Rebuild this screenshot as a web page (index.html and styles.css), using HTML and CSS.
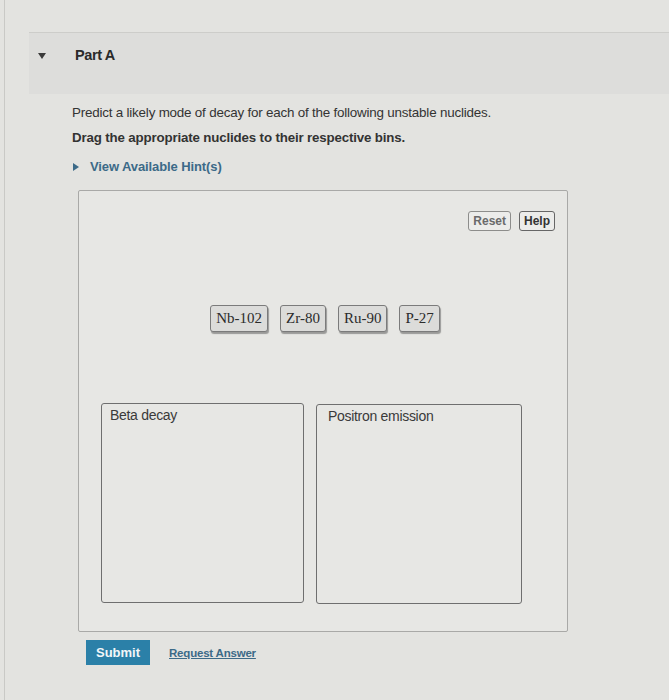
FILE: index.html
```html
<!DOCTYPE html>
<html>
<head>
<meta charset="utf-8">
<link rel="stylesheet" href="styles.css">
</head>
<body>
<div class="page">
  <div class="part-header">
    <span class="caret-down"></span>
    <span class="part-title">Part A</span>
  </div>
  <div class="content">
    <p class="prompt">Predict a likely mode of decay for each of the following unstable nuclides.</p>
    <p class="instr">Drag the appropriate nuclides to their respective bins.</p>
    <div class="hint"><span class="caret-right"></span><span>View Available Hint(s)</span></div>
  </div>
  <div class="box">
    <div class="tools">
      <span class="tool">Reset</span>
      <span class="tool help">Help</span>
    </div>
    <div class="tiles">
      <span class="tile">Nb-102</span>
      <span class="tile">Zr-80</span>
      <span class="tile">Ru-90</span>
      <span class="tile">P-27</span>
    </div>
    <div class="bins">
      <div class="bin">Beta decay</div>
      <div class="bin bin2">Positron emission</div>
    </div>
  </div>
  <div class="actions">
    <span class="submit">Submit</span>
    <span class="request">Request Answer</span>
  </div>
</div>
</body>
</html>
```

FILE: styles.css
```css
html, body {
  margin: 0;
  padding: 0;
  background: #e3e3e0;
  font-family: "Liberation Sans", Arial, sans-serif;
  color: #2e2e2e;
}
.page {
  height: 700px;
  border-left: 1px solid #c9c9c6;
  margin-left: 4px;
  box-sizing: border-box;
  padding-top: 32px;
}
.part-header {
  margin-left: 24px;
  height: 62px;
  border-top: 1px solid #cdcdca;
  background: #dddddb;
  display: flex;
  align-items: flex-start;
  padding-top: 14px;
  box-sizing: border-box;
}
.caret-down {
  width: 0;
  height: 0;
  border-left: 4px solid transparent;
  border-right: 4px solid transparent;
  border-top: 6px solid #3a3a3a;
  margin-left: 9px;
  margin-right: 29px;
  margin-top: 6px;
}
.part-title {
  font-size: 14.5px;
  line-height: 17px;
  font-weight: bold;
  color: #2a2a2a;
  letter-spacing: -0.4px;
}
.content {
  padding-left: 67px;
  padding-top: 10px;
}
.prompt {
  margin: 0;
  font-size: 13.4px;
  line-height: 18px;
  color: #333;
  letter-spacing: -0.2px;
}
.instr {
  margin: 7px 0 0;
  font-size: 13.3px;
  line-height: 18px;
  font-weight: bold;
  color: #333;
  letter-spacing: -0.15px;
}
.hint {
  margin-top: 11px;
  display: flex;
  align-items: center;
  font-size: 13px;
  line-height: 18px;
  font-weight: bold;
  color: #3c6a88;
  letter-spacing: -0.1px;
}
.caret-right {
  width: 0;
  height: 0;
  border-top: 4px solid transparent;
  border-bottom: 4px solid transparent;
  border-left: 6px solid #3c6a88;
  margin-left: 1px;
  margin-right: 11px;
}
.box {
  margin: 14px 0 0 73px;
  width: 490px;
  height: 442px;
  border: 1px solid #a9a9a7;
  border-radius: 2px;
  background: #e7e7e4;
  box-sizing: border-box;
  padding-top: 20px;
}
.tools {
  display: flex;
  justify-content: flex-end;
  gap: 8px;
  padding-right: 12px;
}
.tool {
  display: inline-block;
  height: 20px;
  line-height: 18px;
  box-sizing: border-box;
  padding: 0 4px;
  border: 1px solid #8d8d8b;
  border-radius: 3px;
  background: #ececea;
  font-size: 12px;
  font-weight: bold;
  color: #6a6a6a;
}
.tool.help {
  color: #333;
  border-color: #666;
}
.tiles {
  margin-top: 74px;
  display: flex;
  justify-content: center;
  gap: 12px;
  padding-left: 4px;
}
.tile {
  display: inline-block;
  height: 27px;
  line-height: 25px;
  box-sizing: border-box;
  padding: 0 5px;
  border: 1px solid #7b7b7b;
  border-radius: 3px;
  background: #dcdcda;
  box-shadow: 1px 2px 1px #9a9a98;
  font-family: "Liberation Serif", "Times New Roman", serif;
  font-size: 15px;
  color: #2b2b2b;
}
.bins {
  margin-top: 71px;
  margin-left: 22px;
  display: flex;
  gap: 12px;
}
.bin {
  width: 203px;
  height: 200px;
  box-sizing: border-box;
  border: 1px solid #6f6f6f;
  border-radius: 3px;
  background: #e7e7e4;
  padding: 3px 8px;
  font-size: 14px;
  color: #3a3a3a;
  letter-spacing: -0.3px;
}
.bin2 {
  width: 206px;
  margin-top: 1px;
  padding-left: 11px;
}
.actions {
  margin: 8px 0 0 81px;
  display: flex;
  align-items: center;
}
.submit {
  display: inline-block;
  width: 64px;
  height: 25px;
  line-height: 25px;
  text-align: center;
  background: #2b80a8;
  color: #f2f6f8;
  font-size: 13px;
  font-weight: bold;
}
.request {
  margin-left: 19px;
  font-size: 11.5px;
  font-weight: bold;
  color: #3c6a88;
  text-decoration: underline;
  letter-spacing: -0.2px;
}
```
